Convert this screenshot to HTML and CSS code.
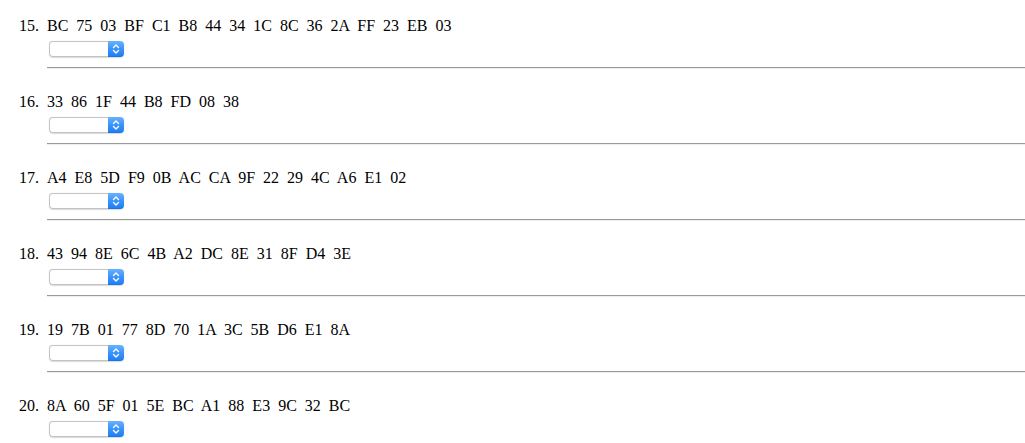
FILE: index.html
```html
<!DOCTYPE html>
<html>
<head>
<meta charset="utf-8">
<link rel="stylesheet" href="styles.css">
</head>
<body>
<ol class="quiz" start="15">
  <li class="item">
    <div class="bytes">BC  75  03  BF  C1  B8  44  34  1C  8C  36  2A  FF  23  EB  03</div>
    <div class="picker"><select class="field"><option></option></select><span class="btn"><svg width="16" height="16" viewBox="0 0 16 16"><path d="M5.5 6.5 L8 4 L10.5 6.5 M5.5 9.5 L8 12 L10.5 9.5" fill="none" stroke="#fff" stroke-width="1.4" stroke-linecap="round" stroke-linejoin="round"/></svg></span></div>
    <hr class="rule">
  </li>
  <li class="item">
    <div class="bytes">33  86  1F  44  B8  FD  08  38</div>
    <div class="picker"><select class="field"><option></option></select><span class="btn"><svg width="16" height="16" viewBox="0 0 16 16"><path d="M5.5 6.5 L8 4 L10.5 6.5 M5.5 9.5 L8 12 L10.5 9.5" fill="none" stroke="#fff" stroke-width="1.4" stroke-linecap="round" stroke-linejoin="round"/></svg></span></div>
    <hr class="rule">
  </li>
  <li class="item">
    <div class="bytes">A4  E8  5D  F9  0B  AC  CA  9F  22  29  4C  A6  E1  02</div>
    <div class="picker"><select class="field"><option></option></select><span class="btn"><svg width="16" height="16" viewBox="0 0 16 16"><path d="M5.5 6.5 L8 4 L10.5 6.5 M5.5 9.5 L8 12 L10.5 9.5" fill="none" stroke="#fff" stroke-width="1.4" stroke-linecap="round" stroke-linejoin="round"/></svg></span></div>
    <hr class="rule">
  </li>
  <li class="item">
    <div class="bytes">43  94  8E  6C  4B  A2  DC  8E  31  8F  D4  3E</div>
    <div class="picker"><select class="field"><option></option></select><span class="btn"><svg width="16" height="16" viewBox="0 0 16 16"><path d="M5.5 6.5 L8 4 L10.5 6.5 M5.5 9.5 L8 12 L10.5 9.5" fill="none" stroke="#fff" stroke-width="1.4" stroke-linecap="round" stroke-linejoin="round"/></svg></span></div>
    <hr class="rule">
  </li>
  <li class="item">
    <div class="bytes">19  7B  01  77  8D  70  1A  3C  5B  D6  E1  8A</div>
    <div class="picker"><select class="field"><option></option></select><span class="btn"><svg width="16" height="16" viewBox="0 0 16 16"><path d="M5.5 6.5 L8 4 L10.5 6.5 M5.5 9.5 L8 12 L10.5 9.5" fill="none" stroke="#fff" stroke-width="1.4" stroke-linecap="round" stroke-linejoin="round"/></svg></span></div>
    <hr class="rule">
  </li>
  <li class="item">
    <div class="bytes">8A  60  5F  01  5E  BC  A1  88  E3  9C  32  BC</div>
    <div class="picker"><select class="field"><option></option></select><span class="btn"><svg width="16" height="16" viewBox="0 0 16 16"><path d="M5.5 6.5 L8 4 L10.5 6.5 M5.5 9.5 L8 12 L10.5 9.5" fill="none" stroke="#fff" stroke-width="1.4" stroke-linecap="round" stroke-linejoin="round"/></svg></span></div>
    <hr class="rule">
  </li>
</ol>
</body>
</html>
```

FILE: styles.css
```css
html, body {
  margin: 0;
  padding: 0;
  background: #fff;
}
body {
  font-family: "Liberation Serif", "Times New Roman", serif;
  font-size: 16px;
  color: #000;
  overflow: hidden;
}
.quiz {
  margin: 0;
  padding: 17px 0 0 47px;
}
.item {
  margin: 0 0 24px 0;
}
.item::marker {
  content: counter(list-item) ".\00a0\00a0";
}
.bytes {
  line-height: 18px;
  height: 18px;
  white-space: pre;
}
.picker {
  display: flex;
  width: 75px;
  height: 16px;
  margin: 6px 0 0 2px;
  border-radius: 4px;
  box-shadow: 0 0.5px 1px rgba(0,0,0,0.15);
}
.field {
  -webkit-appearance: none;
  appearance: none;
  width: 59px;
  height: 16px;
  margin: 0;
  padding: 0;
  border: 1px solid #c4c4c4;
  border-right: none;
  border-radius: 4px 0 0 4px;
  background: #fff;
  font-size: 12px;
  outline: none;
  box-sizing: border-box;
}
.btn {
  display: block;
  width: 16px;
  height: 16px;
  border-radius: 0 4px 4px 0;
  background: linear-gradient(to bottom, #69b1fc 0%, #3a93fb 50%, #1b7ef5 100%);
  box-shadow: inset 0 -1px 0 rgba(0,60,160,0.15);
}
.btn svg {
  display: block;
}
.rule {
  margin: 10px 0 0 0;
  height: 0;
  border: none;
  border-top: 1px solid #9a9a9a;
  border-bottom: 1px solid #eeeeee;
}
```
